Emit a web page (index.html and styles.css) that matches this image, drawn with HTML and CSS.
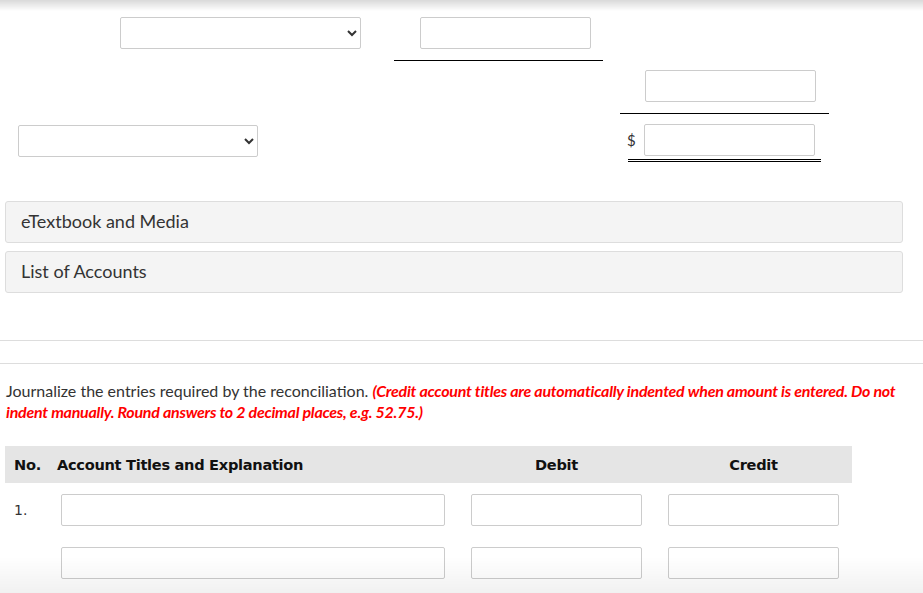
FILE: index.html
```html
<!DOCTYPE html>
<html lang="en">
<head>
<meta charset="utf-8">
<title>Reconciliation</title>
<link rel="stylesheet" href="styles.css">
</head>
<body>
<div class="page">
  <div class="work">
    <div class="row row-a">
      <select class="sel sel-a"><option></option></select>
      <div class="cell cell-a single"><input class="field" type="text"></div>
    </div>
    <div class="row row-b">
      <div class="cell cell-b single"><input class="field" type="text"></div>
    </div>
    <div class="row row-c">
      <select class="sel sel-c"><option></option></select>
      <div class="cell cell-c double"><span class="dollar">$</span><input class="field" type="text"></div>
    </div>
  </div>

  <div class="panels">
    <div class="panel">eTextbook and Media</div>
    <div class="panel">List of Accounts</div>
  </div>

  <div class="divider"></div>

  <p class="instr">Journalize the entries required by the reconciliation. <em class="warn">(Credit account titles are automatically indented when amount is entered. Do not indent manually. Round answers to 2 decimal places, e.g. 52.75.)</em></p>

  <div class="journal">
    <div class="jhead">
      <div class="h-no">No.</div>
      <div class="h-title">Account Titles and Explanation</div>
      <div class="h-num">Debit</div>
      <div class="h-num">Credit</div>
    </div>
    <div class="jrow">
      <div class="no">1.</div>
      <input class="field" type="text">
      <input class="field" type="text">
      <input class="field" type="text">
    </div>
    <div class="jrow">
      <div class="no"></div>
      <input class="field" type="text">
      <input class="field" type="text">
      <input class="field" type="text">
    </div>
  </div>
</div>
</body>
</html>
```

FILE: styles.css
```css
html, body {
  margin: 0;
  padding: 0;
  background: #fff;
}
body {
  font-family: Lato, "Liberation Sans", sans-serif;
  color: #333;
  min-height: 593px;
  overflow: hidden;
}
body::before {
  content: "";
  position: fixed;
  left: 0;
  right: 0;
  top: 0;
  height: 11px;
  background: linear-gradient(to bottom, rgba(0,0,0,0.15), rgba(0,0,0,0));
  pointer-events: none;
  z-index: 5;
}
body::after {
  content: "";
  position: fixed;
  left: 0;
  right: 0;
  bottom: 0;
  height: 36px;
  background: linear-gradient(to bottom, rgba(0,0,0,0), rgba(0,0,0,0.055));
  pointer-events: none;
  z-index: 5;
}
.page {
  padding-top: 17px;
}
.row {
  display: flex;
  align-items: flex-start;
}
.field {
  box-sizing: border-box;
  display: block;
  height: 32px;
  width: 171px;
  margin: 0;
  padding: 0 6px;
  border: 1px solid #ccc;
  border-radius: 2px;
  background: #fff;
  font: 15px Lato, sans-serif;
  outline: none;
}
.sel {
  box-sizing: border-box;
  height: 32px;
  margin: 0;
  border: 1px solid #ccc;
  border-radius: 2px;
  background: #fff;
  font: 15px Lato, sans-serif;
  color: #333;
}
.sel-a {
  margin-left: 120px;
  width: 241px;
}
.cell {
  box-sizing: border-box;
  width: 209px;
}
.single {
  border-bottom: 1px solid #000;
  padding-bottom: 11px;
}
.double {
  border-bottom: 3px double #000;
  padding-bottom: 3px;
}
.cell-a {
  margin-left: 33px;
  padding-left: 26px;
}
.row-b {
  margin-top: 9px;
}
.cell-b {
  margin-left: 620px;
  padding-left: 25px;
}
.row-c {
  margin-top: 10px;
}
.sel-c {
  margin-left: 18px;
  margin-top: 1px;
  width: 240px;
}
.cell-c {
  margin-left: 370px;
  width: 193px;
  display: flex;
  align-items: center;
}
.dollar {
  width: 17px;
  font-size: 15px;
  color: #333;
  margin-left: -1px;
}
.panels {
  margin-top: 39px;
  padding: 0 20px 0 5px;
  display: flex;
  flex-direction: column;
  gap: 8px;
}
.panel {
  box-sizing: border-box;
  height: 42px;
  border: 1px solid #ddd;
  border-radius: 3px;
  background: #f4f4f4;
  padding: 0 0 2px 15px;
  font-size: 18px;
  line-height: 38px;
  color: #333;
}
.divider {
  margin-top: 47px;
  height: 22px;
  border-top: 1px solid #ddd;
  border-bottom: 1px solid #ddd;
}
.instr {
  margin: 16px 0 0 6px;
  font-size: 16px;
  line-height: 21px;
  color: #333;
}
.warn {
  color: #f00;
  font-weight: 700;
  font-style: italic;
  letter-spacing: -0.25px;
}
.journal {
  margin: 24px 0 0 5px;
  width: 847px;
}
.jhead, .jrow {
  display: grid;
  grid-template-columns: 30px 384px 171px 171px;
  column-gap: 26px;
  align-items: center;
}
.jhead {
  height: 37px;
  background: #e5e5e5;
  font-family: "DejaVu Sans", Verdana, sans-serif;
  font-weight: 700;
  font-size: 14.6px;
  letter-spacing: -0.3px;
  color: #111;
}
.h-no {
  padding-left: 9px;
  white-space: nowrap;
}
.h-title {
  margin-left: -4px;
}
.h-num {
  text-align: center;
}
.jrow {
  margin-top: 11px;
}
.jrow + .jrow {
  margin-top: 21px;
}
.no {
  padding-left: 9px;
  font-family: "DejaVu Sans", Verdana, sans-serif;
  font-size: 14px;
  color: #333;
}
.jrow .field {
  width: 100%;
}
```
